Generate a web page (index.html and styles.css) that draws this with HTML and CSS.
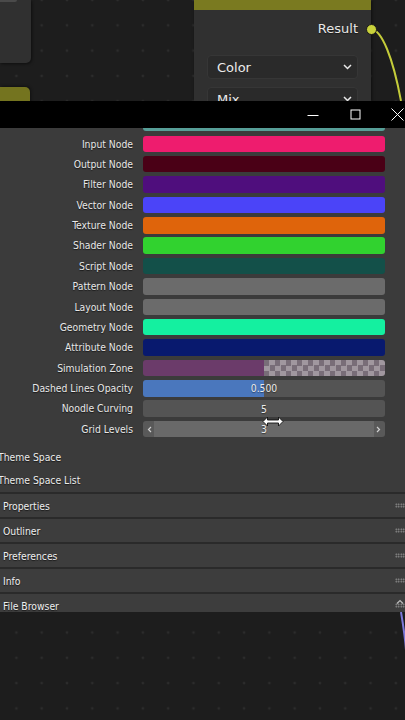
FILE: index.html
```html
<!DOCTYPE html>
<html>
<head>
<meta charset="utf-8">
<title>Theme Preferences</title>
<link rel="stylesheet" href="styles.css">
</head>
<body>
<div class="screen">
  <section class="canvas canvas-top">
    <div class="node node-a"><div class="node-a-widget"></div></div>
    <div class="node node-b"></div>
    <div class="node node-mix">
      <div class="node-head"><span class="node-title">Mix</span></div>
      <div class="node-body">
        <div class="out-row">Result</div>
        <div class="dropdown"><span>Color</span><svg class="chev" width="9" height="6" viewBox="0 0 9 6"><path d="M1 1 L4.5 4.5 L8 1" fill="none" stroke="#e8e8e8" stroke-width="1.5"/></svg></div>
        <div class="dropdown"><span>Mix</span><svg class="chev" width="9" height="6" viewBox="0 0 9 6"><path d="M1 1 L4.5 4.5 L8 1" fill="none" stroke="#e8e8e8" stroke-width="1.5"/></svg></div>
      </div>
    </div>
    <svg class="link" width="405" height="101" viewBox="0 0 405 101"><path d="M371 29 C382 30 393 58 401 101" fill="none" stroke="#c4cc3a" stroke-width="2"/></svg>
    <span class="socket"></span>
  </section>

  <header class="titlebar">
    <div class="win-btn"><svg width="12" height="12" viewBox="0 0 12 12"><path d="M0.5 6.5 H11.5" stroke="#fff" stroke-width="1"/></svg></div>
    <div class="win-btn"><svg width="11" height="11" viewBox="0 0 11 11"><rect x="1" y="1" width="9" height="9" fill="none" stroke="#fff" stroke-width="1"/></svg></div>
    <div class="win-btn"><svg width="13" height="13" viewBox="0 0 13 13"><path d="M0.5 0.5 L12.5 12.5 M12.5 0.5 L0.5 12.5" stroke="#fff" stroke-width="1"/></svg></div>
  </header>

  <main class="prefs">
    <div class="cut-bar"></div>
    <div class="props">
      <span class="lbl">Input Node</span><span class="bar c-input"></span>
      <span class="lbl">Output Node</span><span class="bar c-output"></span>
      <span class="lbl">Filter Node</span><span class="bar c-filter"></span>
      <span class="lbl">Vector Node</span><span class="bar c-vector"></span>
      <span class="lbl">Texture Node</span><span class="bar c-texture"></span>
      <span class="lbl">Shader Node</span><span class="bar c-shader"></span>
      <span class="lbl">Script Node</span><span class="bar c-script"></span>
      <span class="lbl">Pattern Node</span><span class="bar c-grey"></span>
      <span class="lbl">Layout Node</span><span class="bar c-grey"></span>
      <span class="lbl">Geometry Node</span><span class="bar c-geometry"></span>
      <span class="lbl">Attribute Node</span><span class="bar c-attribute"></span>
      <span class="lbl">Simulation Zone</span><span class="bar c-sim"></span>
      <span class="lbl">Dashed Lines Opacity</span><span class="bar num num-fill"><span class="val">0.500</span></span>
      <span class="lbl">Noodle Curving</span><span class="bar num"><span class="val">5</span></span>
      <span class="lbl">Grid Levels</span>
      <span class="bar num num-step">
        <svg class="arr" width="5" height="7" viewBox="0 0 5 7"><path d="M4 1 L1.5 3.5 L4 6" fill="none" stroke="#d0d0d0" stroke-width="1.2"/></svg>
        <span class="val">3</span>
        <svg class="arr" width="5" height="7" viewBox="0 0 5 7"><path d="M1 1 L3.5 3.5 L1 6" fill="none" stroke="#d0d0d0" stroke-width="1.2"/></svg>
      </span>
    </div>

    <div class="space-list">
      <div class="space-item">Theme Space</div>
      <div class="space-item">Theme Space List</div>
    </div>

    <div class="panels">
      <div class="panel-head"><span>Properties</span><span class="grip"></span></div>
      <div class="panel-head"><span>Outliner</span><span class="grip"></span></div>
      <div class="panel-head"><span>Preferences</span><span class="grip"></span></div>
      <div class="panel-head"><span>Info</span><span class="grip"></span></div>
      <div class="panel-head"><span>File Browser</span><span class="grip grip-up"><svg width="8" height="5" viewBox="0 0 8 5"><path d="M1 4.5 L4 1.5 L7 4.5" fill="none" stroke="#bdbdbd" stroke-width="1.2"/></svg></span></div>
    </div>

    <svg class="cursor" width="22" height="11" viewBox="0 0 22 11"><path d="M1 5.5 L5.5 1 L5.5 4 L16.5 4 L16.5 1 L21 5.5 L16.5 10 L16.5 7 L5.5 7 L5.5 10 Z" fill="#fff" stroke="#111" stroke-width="0.9" stroke-linejoin="round"/></svg>
  </main>

  <section class="canvas canvas-bottom">
    <svg class="link2" width="405" height="40" viewBox="0 0 405 40"><path d="M401 0 C403 12 405 24 406 38" fill="none" stroke="#7c78d8" stroke-width="2"/></svg>
  </section>
</div>
</body>
</html>
```

FILE: styles.css
```css
* { box-sizing: border-box; }

html, body {
  margin: 0;
  padding: 0;
  background: #1d1d1d;
}

.screen {
  width: 405px;
  height: 720px;
  display: flex;
  flex-direction: column;
  overflow: hidden;
  background: #1d1d1d;
  font-family: "DejaVu Sans", sans-serif;
}

.canvas {
  background-color: #1d1d1d;
  background-image: radial-gradient(circle, #2c2c2c 0 1px, rgba(44, 44, 44, 0) 1.7px);
  background-size: 25.3px 25.3px;
}

.canvas-top {
  flex: none;
  height: 101px;
  position: relative;
  overflow: hidden;
  background-position: 3.75px -12.65px;
}

.node {
  position: absolute;
}

.node-a {
  left: 0;
  top: 0;
  width: 31px;
  height: 63px;
  background: #303030;
  border-radius: 0 0 5px 0;
  box-shadow: 1px 1px 3px rgba(0, 0, 0, 0.5);
}

.node-a-widget {
  width: 17px;
  height: 2px;
  background: #4a4a4a;
  border-radius: 0 0 2px 0;
}

.node-b {
  left: 0;
  top: 87px;
  width: 30px;
  height: 20px;
  background: #74741f;
  border-radius: 0 5px 0 0;
  box-shadow: 1px -1px 3px rgba(0, 0, 0, 0.4);
}

.node-mix {
  left: 194px;
  top: 0;
  width: 177px;
  height: 110px;
  background: #303030;
  box-shadow: 1px 0 3px rgba(0, 0, 0, 0.5);
}

.node-head {
  height: 10px;
  background: #7a7a20;
  position: relative;
  overflow: hidden;
}

.node-title {
  position: absolute;
  left: 33px;
  top: -11px;
  font-size: 13px;
  line-height: 14px;
  color: #f0f0f0;
}

.node-body {
  padding: 11px 13px 0 13px;
  display: flex;
  flex-direction: column;
}

.out-row {
  height: 16px;
  line-height: 16px;
  text-align: right;
  font-size: 13px;
  color: #e8e8e8;
  text-shadow: 0 1px 1px rgba(0, 0, 0, 0.5);
}

.dropdown {
  height: 24px;
  margin-top: 18px;
  background: #2a2a2a;
  border: 1px solid #363636;
  border-radius: 4px;
  display: flex;
  align-items: center;
  justify-content: space-between;
  padding: 0 5px 0 9px;
  font-size: 13px;
  color: #ececec;
}

.dropdown + .dropdown {
  margin-top: 8px;
}

.chev {
  display: block;
}

.link {
  position: absolute;
  left: 0;
  top: 0;
}

.socket {
  position: absolute;
  left: 366px;
  top: 24px;
  width: 11px;
  height: 11px;
  border-radius: 50%;
  background: #c9d23b;
  border: 1px solid #1a1a1a;
}

.titlebar {
  flex: none;
  height: 27px;
  background: #000;
  display: flex;
  padding-left: 292px;
}

.win-btn {
  flex: none;
  width: 42px;
  height: 27px;
  display: flex;
  align-items: center;
  justify-content: center;
}

.win-btn svg {
  display: block;
}

.prefs {
  flex: none;
  height: 484px;
  position: relative;
  overflow: hidden;
  background: #3b3b3b;
  font-family: "DejaVu Sans Condensed", "DejaVu Sans", sans-serif;
  font-stretch: condensed;
  font-size: 10.3px;
  color: #e8e8e8;
}

.cut-bar {
  margin-left: 143px;
  width: 242px;
  height: 3px;
  background: #569e97;
  border-radius: 0 0 3px 3px;
}

.props {
  display: grid;
  grid-template-columns: 133px 242px;
  column-gap: 10px;
  row-gap: 3.89px;
  margin-top: 4.6px;
  align-items: center;
}

.lbl {
  text-align: right;
  line-height: 16.5px;
  white-space: nowrap;
  text-shadow: 0 1px 1px rgba(0, 0, 0, 0.6);
}

.bar {
  height: 16.5px;
  border-radius: 3px;
  display: flex;
  align-items: center;
  justify-content: center;
  position: relative;
}

.c-input { background: #ee1c6e; }
.c-output { background: #4a0016; }
.c-filter { background: #4f0e7d; }
.c-vector { background: #4b44f8; }
.c-texture { background: #df640b; }
.c-shader { background: #31d22f; }
.c-script { background: #135049; }
.c-grey { background: #6b6b6b; }
.c-geometry { background: #14f0a0; }
.c-attribute { background: #08196e; }

.c-sim {
  background:
    linear-gradient(90deg, #6b3b6a 0 50%, rgba(0, 0, 0, 0) 50%),
    repeating-conic-gradient(#a0979f 0 25%, #786d78 0 50%) 0 0 / 11px 11px;
}

.num {
  background: #545454;
}

.num-fill {
  background: linear-gradient(90deg, #4a77bd 0 50%, #545454 50%);
}

.num-step {
  background: linear-gradient(90deg, #595959 0 11px, #696969 11px calc(100% - 11px), #595959 calc(100% - 11px));
  justify-content: space-between;
  padding: 0 4px 0 4px;
}

.val {
  color: #ececec;
  text-shadow: 0 1px 1px rgba(0, 0, 0, 0.45);
}

.arr {
  display: block;
}

.space-list {
  margin-top: 8.8px;
}

.space-item {
  height: 23px;
  line-height: 23px;
  text-indent: -2px;
  color: #ececec;
  text-shadow: 0 1px 1px rgba(0, 0, 0, 0.6);
}

.panel-head {
  height: 25px;
  border-top: 2px solid #2a2a2a;
  background: #3d3d3d;
  display: flex;
  align-items: center;
  justify-content: space-between;
  padding-left: 3px;
  color: #f0f0f0;
  text-shadow: 0 1px 1px rgba(0, 0, 0, 0.6);
}

.grip {
  width: 10px;
  height: 5px;
  background-image: radial-gradient(circle, #9a9a9a 0 0.6px, rgba(0, 0, 0, 0) 1px);
  background-size: 2.5px 2.5px;
  position: relative;
}

.grip-up svg {
  position: absolute;
  left: 1px;
  top: -4px;
  display: block;
}

.cursor {
  position: absolute;
  left: 262px;
  top: 288px;
}

.canvas-bottom {
  flex: 1;
  position: relative;
  background-position: 3.75px 7.85px;
}

.link2 {
  position: absolute;
  left: 0;
  top: 0;
}
```
